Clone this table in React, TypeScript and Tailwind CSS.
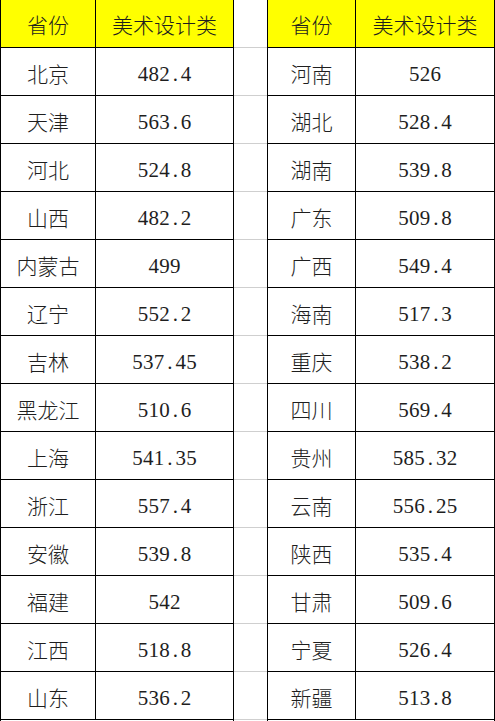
import React from "react";

const left: [string, string][] = [
  ["北京", "482.4"],
  ["天津", "563.6"],
  ["河北", "524.8"],
  ["山西", "482.2"],
  ["内蒙古", "499"],
  ["辽宁", "552.2"],
  ["吉林", "537.45"],
  ["黑龙江", "510.6"],
  ["上海", "541.35"],
  ["浙江", "557.4"],
  ["安徽", "539.8"],
  ["福建", "542"],
  ["江西", "518.8"],
  ["山东", "536.2"],
];

const right: [string, string][] = [
  ["河南", "526"],
  ["湖北", "528.4"],
  ["湖南", "539.8"],
  ["广东", "509.8"],
  ["广西", "549.4"],
  ["海南", "517.3"],
  ["重庆", "538.2"],
  ["四川", "569.4"],
  ["贵州", "585.32"],
  ["云南", "556.25"],
  ["陕西", "535.4"],
  ["甘肃", "509.6"],
  ["宁夏", "526.4"],
  ["新疆", "513.8"],
];

const cjk = "font-['Noto_Sans_CJK_SC',sans-serif] text-[21px] font-light";

// half-width digits, every char in a fixed cell like the spreadsheet's font
function Score({ value }: { value: string }) {
  return (
    <span className="flex font-['Liberation_Serif',serif] text-[21px]">
      {value.split("").map((c, i) => (
        <span key={i} className="inline-block w-[10.8px] text-center">
          {c}
        </span>
      ))}
    </span>
  );
}

function Table({ rows, firstCol, width }: { rows: [string, string][]; firstCol: string; width: string }) {
  return (
    <div className={`${width} border-l border-r border-black`}>
      <div className="flex h-[48px] border-b border-black bg-[#ffff00]">
        <div className={`${firstCol} flex items-center justify-center border-r border-black pt-[3px] ${cjk}`}>省份</div>
        <div className={`flex flex-1 items-center justify-center pt-[3px] ${cjk}`}>美术设计类</div>
      </div>
      {rows.map(([p, s]) => (
        <div key={p} className="flex h-[48px] border-b border-black bg-white">
          <div className={`${firstCol} flex items-center justify-center border-r border-black pt-[4px] ${cjk}`}>{p}</div>
          <div className="flex flex-1 items-center justify-center pt-[7px]">
            <Score value={s} />
          </div>
        </div>
      ))}
    </div>
  );
}

export default function App() {
  return (
    <div className="flex h-[721px] w-[495px] overflow-hidden bg-white text-[#1e1e1e]">
      <Table rows={left} firstCol="w-[95px]" width="w-[234px]" />
      <div className="w-[33px]">
        {Array.from({ length: 15 }).map((_, i) => (
          <div key={i} className="h-[48px] border-b border-[#cfcfcf]" />
        ))}
      </div>
      <Table rows={right} firstCol="w-[88px]" width="w-[228px]" />
    </div>
  );
}
